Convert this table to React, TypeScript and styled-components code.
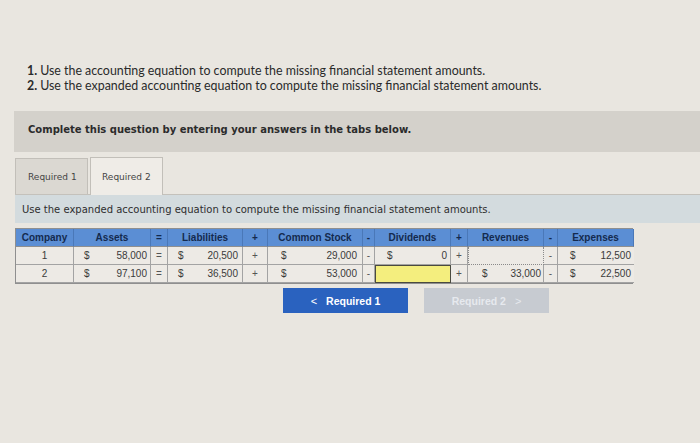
import React from "react";
import styled, { createGlobalStyle } from "styled-components";

const Global = createGlobalStyle`
  html, body { margin: 0; padding: 0; }
  body {
    background: #e9e6e0;
    width: 700px;
    height: 443px;
    overflow: hidden;
    font-family: "Lato", "Liberation Sans", sans-serif;
    color: #222;
  }
`;

const Page = styled.div`
  padding-top: 63px;
  display: flex;
  flex-direction: column;
`;

const Instructions = styled.ol`
  list-style: none;
  margin: 0 0 0 27px;
  padding: 0;
  font-family: "Lato", "Liberation Sans", sans-serif;
  font-size: 12.4px;
  line-height: 15px;
  color: #2a2a2a;
`;

const Num = styled.b`
  font-weight: 700;
  margin-right: 3px;
`;

const QuestionBand = styled.div`
  margin: 18px 0 0 14px;
  height: 41px;
  background: #d4d1cb;
  display: flex;
  align-items: center;
  padding: 0 0 4px 14px;
  box-sizing: border-box;
  font-family: "DejaVu Sans", Verdana, sans-serif;
  font-weight: 700;
  font-size: 10px;
  color: #2b2b2b;
`;

const TabRow = styled.div`
  margin: 4px 0 0 15px;
  display: flex;
  align-items: flex-end;
  gap: 2px;
  height: 38px;
  border-bottom: 1px solid #c4c1bb;
`;

const Tab = styled.div<{ $active?: boolean }>`
  box-sizing: border-box;
  width: 73px;
  height: ${(p) => (p.$active ? 38 : 36)}px;
  display: flex;
  align-items: center;
  padding-left: ${(p) => (p.$active ? 11 : 12)}px;
  background: ${(p) => (p.$active ? "#efece7" : "#dbd8d2")};
  border: 1px solid #c2bfb9;
  border-bottom: none;
  font-family: "DejaVu Sans", Verdana, sans-serif;
  font-size: 9px;
  color: #444;
  margin-bottom: ${(p) => (p.$active ? -1 : 0)}px;
`;

const InfoBand = styled.div`
  margin-left: 15px;
  height: 28px;
  background: #d3dbde;
  display: flex;
  align-items: center;
  padding-left: 7px;
  font-family: "DejaVu Sans", Verdana, sans-serif;
  font-size: 10px;
  color: #2e2e2e;
`;

const Table = styled.div`
  margin: 5px 0 0 15px;
  width: 618px;
  display: grid;
  grid-template-columns: 58px 77px 17px 75px 25px 95px 12px 76px 17px 76px 14px 76px;
  grid-auto-rows: 18px;
  border: 1px solid #8f8f8f;
  box-sizing: border-box;
  font-family: "Liberation Sans", Arial, sans-serif;
  font-size: 10px;
`;

const Head = styled.div`
  background: #5b8ed4;
  color: #142a4e;
  font-weight: 700;
  display: flex;
  align-items: center;
  justify-content: center;
  border-right: 1px solid #4a78b8;
  border-bottom: 1px solid #8f8f8f;
  &:last-child { border-right: none; }
`;

const Cell = styled.div<{ $last?: boolean }>`
  background: #edeae5;
  color: #3a3a3a;
  display: flex;
  align-items: center;
  border-right: ${(p) => (p.$last ? "none" : "1px solid #a3a3a3")};
  border-bottom: 1px solid #a3a3a3;
  box-sizing: border-box;
  min-width: 0;
`;

const CenterCell = styled(Cell)`
  justify-content: center;
`;

const Op = styled(Cell)`
  justify-content: center;
  color: #555;
`;

const Money = styled(Cell)<{ $pl: number; $pr: number }>`
  justify-content: space-between;
  padding-left: ${(p) => p.$pl}px;
  padding-right: ${(p) => p.$pr}px;
`;

const EmptyInput = styled(Cell)`
  border: 1px dotted #8a8a8a;
  border-top: none;
`;

const YellowInput = styled(Cell)`
  background: #f4ee7e;
  border: 1px solid #4a4a40;
`;

const Buttons = styled.div`
  margin: 4px 0 0 283px;
  display: flex;
  gap: 16px;
`;

const NavButton = styled.button<{ $enabled?: boolean }>`
  width: 125px;
  height: 25px;
  border: none;
  padding: 0;
  background: ${(p) => (p.$enabled ? "#2a62bf" : "#c7cbd1")};
  color: ${(p) => (p.$enabled ? "#ffffff" : "#e6e9ee")};
  font-family: "Liberation Sans", Arial, sans-serif;
  font-weight: 700;
  font-size: 10.5px;
  display: flex;
  align-items: center;
  justify-content: center;
  gap: 9px;
`;

const Chevron = styled.span`
  font-weight: 400;
  font-size: 11px;
`;

type Row = {
  company: string;
  assets: string;
  liab: string;
  cs: string;
  div?: string;
  rev?: string;
  exp: string;
};

const rows: Row[] = [
  { company: "1", assets: "58,000", liab: "20,500", cs: "29,000", div: "0", exp: "12,500" },
  { company: "2", assets: "97,100", liab: "36,500", cs: "53,000", rev: "33,000", exp: "22,500" },
];

export default function App() {
  return (
    <>
      <Global />
      <Page>
        <Instructions>
          <li>
            <Num>1.</Num>Use the accounting equation to compute the missing financial statement amounts.
          </li>
          <li>
            <Num>2.</Num>Use the expanded accounting equation to compute the missing financial statement amounts.
          </li>
        </Instructions>
        <QuestionBand>Complete this question by entering your answers in the tabs below.</QuestionBand>
        <TabRow>
          <Tab>Required 1</Tab>
          <Tab $active>Required 2</Tab>
        </TabRow>
        <InfoBand>Use the expanded accounting equation to compute the missing financial statement amounts.</InfoBand>
        <Table>
          <Head>Company</Head>
          <Head>Assets</Head>
          <Head>=</Head>
          <Head>Liabilities</Head>
          <Head>+</Head>
          <Head>Common Stock</Head>
          <Head>-</Head>
          <Head>Dividends</Head>
          <Head>+</Head>
          <Head>Revenues</Head>
          <Head>-</Head>
          <Head>Expenses</Head>
          {rows.map((r) => (
            <React.Fragment key={r.company}>
              <CenterCell>{r.company}</CenterCell>
              <Money $pl={10} $pr={3}>
                <span>$</span>
                <span>{r.assets}</span>
              </Money>
              <Op>=</Op>
              <Money $pl={10} $pr={4}>
                <span>$</span>
                <span>{r.liab}</span>
              </Money>
              <Op>+</Op>
              <Money $pl={13} $pr={5}>
                <span>$</span>
                <span>{r.cs}</span>
              </Money>
              <Op>-</Op>
              {r.div !== undefined ? (
                <Money $pl={12} $pr={3}>
                  <span>$</span>
                  <span>{r.div}</span>
                </Money>
              ) : (
                <YellowInput />
              )}
              <Op>+</Op>
              {r.rev !== undefined ? (
                <Money $pl={14} $pr={2}>
                  <span>$</span>
                  <span>{r.rev}</span>
                </Money>
              ) : (
                <EmptyInput />
              )}
              <Op>-</Op>
              <Money $pl={12} $pr={3} $last>
                <span>$</span>
                <span>{r.exp}</span>
              </Money>
            </React.Fragment>
          ))}
        </Table>
        <Buttons>
          <NavButton $enabled>
            <Chevron>&lt;</Chevron>Required 1
          </NavButton>
          <NavButton>
            Required 2<Chevron>&gt;</Chevron>
          </NavButton>
        </Buttons>
      </Page>
    </>
  );
}
